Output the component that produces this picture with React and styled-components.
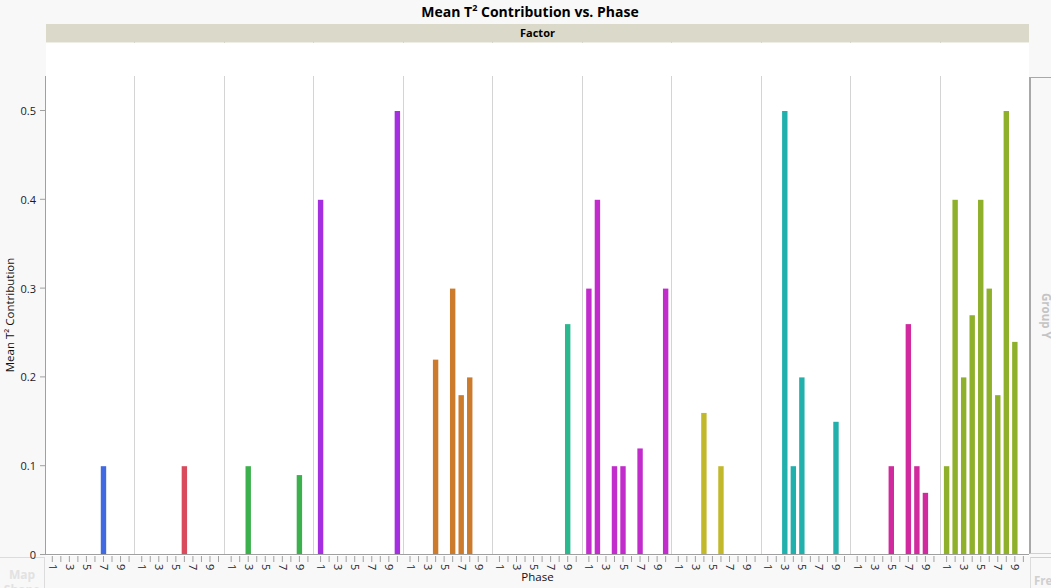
import React from 'react';
import styled, { createGlobalStyle } from 'styled-components';

const GlobalStyle = createGlobalStyle`
  html, body { margin: 0; padding: 0; background: #f8f8f8; }
  body { font-family: "Open Sans", "Noto Sans", sans-serif; overflow: hidden; }
`;

const CAT_W = 8.53;
const PLOT_H = 479;
const UNIT = 888; // px for a contribution of 1

const factors = [
  { color: '#4169e1', bars: { 7: 0.1 } },
  { color: '#d94a5c', bars: { 6: 0.1 } },
  { color: '#3cb04c', bars: { 3: 0.1, 9: 0.09 } },
  { color: '#a42fe0', bars: { 1: 0.4, 10: 0.5 } },
  { color: '#cc7a2c', bars: { 4: 0.22, 6: 0.3, 7: 0.18, 8: 0.2 } },
  { color: '#2cb88e', bars: { 9: 0.26 } },
  { color: '#c22ccc', bars: { 1: 0.3, 2: 0.4, 4: 0.1, 5: 0.1, 7: 0.12, 10: 0.3 } },
  { color: '#c2b82c', bars: { 4: 0.16, 6: 0.1 } },
  { color: '#22b0ac', bars: { 3: 0.5, 4: 0.1, 5: 0.2, 9: 0.15 } },
  { color: '#d02a9e', bars: { 5: 0.1, 7: 0.26, 8: 0.1, 9: 0.07 } },
  { color: '#8fb02a', bars: { 1: 0.1, 2: 0.4, 3: 0.2, 4: 0.27, 5: 0.4, 6: 0.3, 7: 0.18, 8: 0.5, 9: 0.24 } },
];

const yTicks = [0, 0.1, 0.2, 0.3, 0.4, 0.5];
const phases = [1, 2, 3, 4, 5, 6, 7, 8, 9, 10];

const catX = (panel, phase) => panel * 89.43 + 6.3 + (phase - 1) * CAT_W;
const dividerX = (panel) => Math.round(89.5 * panel - 1.3);

const Page = styled.div`
  width: 1051px;
  height: 588px;
  display: grid;
  grid-template-columns: 46px 983px 22px;
  grid-template-rows: 24px 19px 33px 480px 32px;
  background: #f8f8f8;
  overflow: hidden;
`;

const Title = styled.div`
  grid-column: 1 / 4;
  text-align: center;
  padding-left: 9px;
  font-size: 14px;
  line-height: 23px;
  font-weight: 700;
  color: #000;
  white-space: nowrap;
  sup { font-size: 9px; line-height: 0; }
`;

const Strip = styled.div`
  grid-column: 2;
  grid-row: 2;
  position: relative;
  background: #dbd9c9;
  border-bottom: 1px solid #eeeee6;
  text-align: center;
  font-size: 11px;
  line-height: 18px;
  font-weight: 700;
  color: #000;
`;

const Notch = styled.span`
  position: absolute;
  bottom: -1px;
  width: 1px;
  height: 2px;
  background: #d6d6ca;
`;

const Blank = styled.div`
  grid-column: 2;
  grid-row: 3;
  background: #fff;
`;

const YAxis = styled.svg`
  grid-column: 1;
  grid-row: 4;
  display: block;
  overflow: visible;
  position: relative;
  z-index: 1;
`;

const TickLabel = styled.text`
  font-size: 11px;
  fill: #1a1a2a;
`;

const AxisTitle = styled.text`
  font-size: 11.5px;
  fill: #111;
`;

const Plot = styled.svg`
  grid-column: 2;
  grid-row: 4;
  display: block;
  background: #fff;
`;

const XAxisCell = styled.div`
  grid-column: 2;
  grid-row: 5;
  display: flex;
  flex-direction: column;
  align-items: center;
`;

const XAxis = styled.svg`
  display: block;
  flex: none;
  margin-bottom: -19px;
`;

const AxisName = styled.div`
  font-size: 11.5px;
  line-height: 16px;
  color: #111;
`;

const MapShape = styled.div`
  grid-column: 1;
  grid-row: 5;
  margin-top: 1px;
  height: 31px;
  width: 45px;
  border-top: 1px solid #dcdcdc;
  border-right: 1px solid #dcdcdc;
  padding-top: 9px;
  box-sizing: border-box;
  overflow: hidden;
  text-align: center;
  font-size: 12px;
  line-height: 15px;
  font-weight: 700;
  color: #e2e2e2;
`;

const GroupY = styled.div`
  grid-column: 3;
  grid-row: 4;
  border-left: 2px solid #a8a8a8;
  border-top: 1px solid #a8a8a8;
  border-bottom: 1px solid #d0d0d0;
  margin-top: 1px;
  margin-bottom: 2px;
  display: flex;
  align-items: center;
  justify-content: center;
  writing-mode: vertical-rl;
  padding-left: 11px;
  font-size: 11.5px;
  font-weight: 700;
  color: #c4c4c4;
`;

const Freq = styled.div`
  grid-column: 3;
  grid-row: 5;
  margin-left: 1px;
  margin-top: 1px;
  border-top: 1px solid #d0d0d0;
  border-left: 1px solid #dcdcdc;
  padding: 15px 0 0 3px;
  overflow: hidden;
  white-space: nowrap;
  font-size: 11.5px;
  line-height: 15px;
  font-weight: 700;
  color: #cfcfcf;
`;

const App = () => {
  return (
    <>
      <GlobalStyle />
      <Page>
        <Title>Mean T<sup>2</sup> Contribution vs. Phase</Title>
        <Strip>
          Factor
          {factors.slice(1).map((f, i) => (
            <Notch key={f.color} style={{ left: dividerX(i + 1) }} />
          ))}
        </Strip>
        <Blank />

        <YAxis width="46" height="480" viewBox="0 0 46 480">
          <line x1="45.5" y1="0" x2="45.5" y2={PLOT_H} stroke="#a0a0a0" />
          {yTicks.map((t) => {
            const y = PLOT_H - t * UNIT;
            return (
              <g key={t}>
                <line x1="40" y1={y - 0.5} x2="46" y2={y - 0.5} stroke="#a0a0a0" />
                <TickLabel x="36" y={y + 4} textAnchor="end">{t}</TickLabel>
              </g>
            );
          })}
          <AxisTitle transform="translate(13.5 239) rotate(-90)" textAnchor="middle">
            Mean T² Contribution
          </AxisTitle>
        </YAxis>

        <Plot width="983" height="480" viewBox="0 0 983 480">
          {factors.map((f, i) => (
            <g key={f.color}>
              {i > 0 && (
                <line
                  x1={dividerX(i) + 0.5}
                  y1="0"
                  x2={dividerX(i) + 0.5}
                  y2={PLOT_H}
                  stroke="#d4d4d4"
                />
              )}
              {Object.entries(f.bars).map(([phase, v]) => (
                <rect
                  key={phase}
                  x={catX(i, Number(phase)) - 2.7}
                  y={PLOT_H - v * UNIT}
                  width="5.4"
                  height={v * UNIT}
                  fill={f.color}
                />
              ))}
            </g>
          ))}
          <line x1="0" y1={PLOT_H - 0.5} x2="983" y2={PLOT_H - 0.5} stroke="#a0a0a0" />
        </Plot>

        <XAxisCell>
          <XAxis width="983" height="32" viewBox="0 0 983 32">
            {factors.map((f, i) =>
              phases.map((p) => {
                const x = catX(i, p);
                return (
                  <g key={p}>
                    <line x1={x} y1="0" x2={x} y2="6" stroke="#a0a0a0" />
                    {p % 2 === 1 && (
                      <TickLabel transform={`translate(${x - 3.5} 8) rotate(90)`}>{p}</TickLabel>
                    )}
                  </g>
                );
              })
            )}
          </XAxis>
          <AxisName>Phase</AxisName>
        </XAxisCell>

        <MapShape>Map Shape</MapShape>
        <GroupY>Group Y</GroupY>
        <Freq>Freq</Freq>
      </Page>
    </>
  );
};

export default App;
